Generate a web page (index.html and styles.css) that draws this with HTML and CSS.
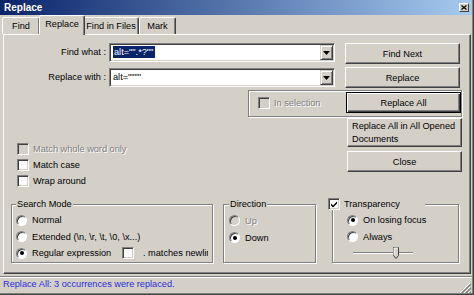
FILE: index.html
```html
<!DOCTYPE html>
<html>
<head>
<meta charset="utf-8">
<link rel="stylesheet" href="styles.css">
</head>
<body>
<div class="win">
  <div class="title">
    <span class="title-text">Replace</span>
    <span class="close"><svg width="6" height="5" viewBox="0 0 6 5"><path d="M0.5 0.5 L5.5 4.5 M5.5 0.5 L0.5 4.5" stroke="#000" stroke-width="1.2"/></svg></span>
  </div>
  <div class="tabs">
    <div class="tab t-find">Find</div>
    <div class="tab t-replace active">Replace</div>
    <div class="tab t-files">Find in Files</div>
    <div class="tab t-mark">Mark</div>
  </div>
  <div class="panel">
    <div class="row r1">
      <span class="flabel">Find what :</span>
      <div class="combo">
        <div class="combo-text"><span class="sel">alt="".*?""</span></div>
        <div class="ddbtn"><svg width="7" height="4" viewBox="0 0 7 4"><path d="M0 0 H7 L3.5 4 Z" fill="#000"/></svg></div>
      </div>
      <button class="btn">Find Next</button>
    </div>
    <div class="row r2">
      <span class="flabel">Replace with :</span>
      <div class="combo combo2">
        <div class="combo-text">alt=""""</div>
        <div class="ddbtn"><svg width="7" height="4" viewBox="0 0 7 4"><path d="M0 0 H7 L3.5 4 Z" fill="#000"/></svg></div>
      </div>
      <button class="btn">Replace</button>
    </div>
    <div class="row r3">
      <div class="selgroup etched">
        <span class="item chk-item disabled"><span class="cb cb-dis"></span>In selection</span>
        <button class="btn default">Replace All</button>
      </div>
    </div>
    <div class="row r4">
      <div class="opts">
        <div class="item chk-item disabled o1"><span class="cb cb-dis"></span>Match whole word only</div>
        <div class="item chk-item o2"><span class="cb"></span>Match case</div>
        <div class="item chk-item o3"><span class="cb"></span>Wrap around</div>
      </div>
      <div class="btncol">
        <button class="btn multi">Replace All in All Opened<br>Documents</button>
        <button class="btn">Close</button>
      </div>
    </div>
    <div class="row groups">
      <div class="group etched g-search">
        <span class="gtitle">Search Mode</span>
        <div class="item rad-item i1"><span class="radio"></span>Normal</div>
        <div class="item rad-item i2"><span class="radio"></span>Extended (\n, \r, \t, \0, \x...)</div>
        <div class="item i3">
          <span class="regex"><span class="radio"><span class="dot"></span></span>Regular expression</span>
          <span class="newline"><span class="cb"></span><span class="nltext">. matches newline</span></span>
        </div>
      </div>
      <div class="group etched g-dir">
        <span class="gtitle">Direction</span>
        <div class="item rad-item i1 disabled"><span class="radio radio-dis"></span>Up</div>
        <div class="item rad-item i2"><span class="radio"><span class="dot"></span></span>Down</div>
      </div>
      <div class="group etched g-trans">
        <span class="gtitle ttitle"><span class="cb"><svg width="8" height="8" viewBox="0 0 8 8"><path d="M1 3.5 L3 5.5 L7 1.5 V3.5 L3 7.5 L1 5.5 Z" fill="#000"/></svg></span>Transparency</span>
        <div class="item rad-item i1"><span class="radio"><span class="dot"></span></span>On losing focus</div>
        <div class="item rad-item i2"><span class="radio"></span>Always</div>
        <div class="slider">
          <span class="track tl"></span>
          <svg class="thumb" width="6" height="12" viewBox="0 0 6 12"><path d="M0.5 0.5 H5.5 V8.5 L3 11.5 L0.5 8.5 Z" fill="#d4d0c8" stroke="#404040"/><path d="M1 8 V1 H5" fill="none" stroke="#fff"/></svg>
          <span class="track tr"></span>
        </div>
      </div>
    </div>
  </div>
  <div class="status">
    <span class="stext">Replace All: 3 occurrences were replaced.</span>
    <svg class="grip" width="12" height="12" viewBox="0 0 12 12">
      <path d="M11 1 L1 11 M11 5 L5 11 M11 9 L9 11" stroke="#fff" stroke-width="1"/>
      <path d="M12 2 L2 12 M12 6 L6 12 M12 10 L10 12" stroke="#808080" stroke-width="1.4"/>
    </svg>
  </div>
</div>
</body>
</html>
```

FILE: styles.css
```css
html, body {
  margin: 0;
  padding: 0;
  background: #d4d0c8;
}
body {
  font-family: "Liberation Sans", Arial, sans-serif;
  font-size: 9.2px;
  color: #000;
}
.win {
  width: 474px;
  height: 295px;
  box-sizing: border-box;
  border-right: 1px solid #404040;
  border-bottom: 1px solid #404040;
  box-shadow: inset -1px -1px 0 #808080;
  display: flex;
  flex-direction: column;
  overflow: hidden;
}
.title {
  height: 15px;
  flex: none;
  margin-right: 1px;
  background: linear-gradient(to right, #0a246a, #a6caf0);
  display: flex;
  align-items: center;
  padding: 0 3px 0 4px;
}
.title-text {
  flex: 1;
  color: #fff;
  font-weight: bold;
  font-size: 10px;
}
.close {
  width: 10px;
  height: 9px;
  box-sizing: border-box;
  background: #d4d0c8;
  border: 1px solid;
  border-color: #fff #404040 #404040 #fff;
  display: flex;
  align-items: center;
  justify-content: center;
}
.tabs {
  height: 19px;
  flex: none;
  display: flex;
  align-items: flex-end;
  padding-left: 2px;
  position: relative;
  z-index: 1;
}
.tab {
  height: 17px;
  box-sizing: border-box;
  border: 1px solid;
  border-bottom: none;
  border-color: #fff #404040 transparent #fff;
  border-radius: 2px 2px 0 0;
  box-shadow: inset -1px 0 0 #808080;
  background: #d4d0c8;
  display: flex;
  align-items: center;
  justify-content: center;
  padding-bottom: 1px;
}
.t-find { width: 38px; }
.t-replace { width: 46px; }
.t-files { width: 56px; }
.t-mark { width: 37px; }
.tab.active {
  height: 20px;
  margin: 0 -2px -1px -1px;
  position: relative;
  z-index: 2;
  padding-bottom: 3px;
}
.panel {
  height: 240px;
  width: 468px;
  flex: none;
  box-sizing: border-box;
  margin-left: 3px;
  border: 1px solid;
  border-color: #fff #404040 #404040 #fff;
  box-shadow: inset -1px -1px 0 #808080;
  padding-top: 8px;
}
.row {
  display: flex;
  align-items: flex-start;
}
.r1 { height: 21px; }
.r2 { height: 21px; margin-top: 3px; }
.flabel {
  width: 102px;
  margin-right: 3px;
  text-align: right;
  line-height: 19px;
  white-space: nowrap;
}
.r2 .flabel { margin-top: 1px; }
.combo {
  width: 226px;
  height: 19px;
  box-sizing: border-box;
  background: #fff;
  border: 1px solid;
  border-color: #808080 #fff #fff #808080;
  box-shadow: inset 1px 1px 0 #404040, inset -1px -1px 0 #d4d0c8;
  display: flex;
  align-items: center;
  padding: 1px;
}
.combo2 { margin-top: 1px; }
.combo-text {
  flex: 1;
  padding-left: 2px;
  white-space: nowrap;
  line-height: 13px;
}
.sel {
  background: #0a246a;
  color: #fff;
  padding: 1px 2px 1px 1px;
}
.ddbtn {
  width: 13px;
  height: 15px;
  box-sizing: border-box;
  background: #d4d0c8;
  border: 1px solid;
  border-color: #d4d0c8 #404040 #404040 #d4d0c8;
  box-shadow: inset 1px 1px 0 #fff, inset -1px -1px 0 #808080;
  display: flex;
  align-items: center;
  justify-content: center;
}
.btn {
  width: 115px;
  height: 21px;
  margin: 0 0 0 10px;
  padding: 0;
  box-sizing: border-box;
  font: inherit;
  color: #000;
  background: #d4d0c8;
  border: 1px solid;
  border-color: #fff #404040 #404040 #fff;
  box-shadow: inset -1px -1px 0 #808080;
  flex: none;
}
.btn.default {
  border: 1px solid #000;
  box-shadow: inset 1px 1px 0 #fff, inset -1px -1px 0 #404040, inset -2px -2px 0 #808080;
  margin: 1px 0 0 auto;
}
.etched {
  border: 1px solid #808080;
  box-shadow: inset 1px 1px 0 #fff, 1px 1px 0 #fff;
  box-sizing: border-box;
}
.r3 { margin-top: 2px; }
.selgroup {
  margin-left: 244px;
  width: 214px;
  height: 27px;
  display: flex;
  align-items: flex-start;
}
.selgroup .chk-item {
  height: 23px;
  margin-left: 9px;
}
.item {
  display: flex;
  align-items: center;
  white-space: nowrap;
}
.chk-item { gap: 4px; }
.rad-item { gap: 5px; }
.disabled {
  color: #808080;
  text-shadow: 1px 1px 0 #fff;
}
.cb {
  width: 12px;
  height: 12px;
  flex: none;
  box-sizing: border-box;
  background: #fff;
  border: 1px solid;
  border-color: #808080 #fff #fff #808080;
  box-shadow: inset 1px 1px 0 #404040, inset -1px -1px 0 #d4d0c8;
  display: flex;
  align-items: center;
  justify-content: center;
}
.cb-dis { background: #d4d0c8; }
.radio {
  width: 11px;
  height: 11px;
  flex: none;
  box-sizing: border-box;
  border-radius: 50%;
  background: #fff;
  border: 1px solid;
  border-color: #808080 #fff #fff #808080;
  box-shadow: inset 1px 1px 0 #404040;
  display: flex;
  align-items: center;
  justify-content: center;
}
.radio-dis { background: #d4d0c8; }
.dot {
  width: 4px;
  height: 4px;
  border-radius: 50%;
  background: #000;
}
.r4 {
  margin-top: 1px;
  height: 71px;
}
.opts {
  padding: 22px 0 0 13px;
  display: flex;
  flex-direction: column;
}
.o1 { height: 17px; }
.o2 { height: 16px; }
.o3 { height: 16px; }
.btncol {
  margin-left: auto;
  margin-right: 8px;
  display: flex;
  flex-direction: column;
  gap: 4px;
}
.btncol .btn { margin-left: 0; }
.btn.multi {
  height: 29px;
  text-align: left;
  padding-left: 4px;
  line-height: 12.5px;
}
.groups { margin-top: 15px; }
.group {
  height: 59px;
  display: flex;
  flex-direction: column;
  align-items: flex-start;
}
.gtitle {
  height: 12px;
  line-height: 12px;
  margin-top: -7px;
  padding: 0 1px;
  background: #d4d0c8;
  white-space: nowrap;
  margin-bottom: 2px;
}
.g-search {
  margin-left: 7px;
  width: 202px;
  padding-left: 4px;
}
.g-dir {
  margin-left: 10px;
  width: 93px;
  padding-left: 5px;
}
.g-trans {
  margin-left: 16px;
  width: 127px;
  padding-left: 14px;
}
.ttitle {
  display: flex;
  align-items: center;
  gap: 4px;
  width: 96px;
  margin-left: -20px;
  padding-left: 1px;
}
.i1 { height: 16px; }
.i2 { height: 17px; }
.i3 { height: 16px; gap: 0; }
.g-dir .i1 { height: 17px; }
.regex {
  display: flex;
  align-items: center;
  gap: 5px;
  width: 106px;
}
.newline {
  display: flex;
  align-items: center;
  gap: 9px;
  width: 86px;
  overflow: hidden;
}
.slider {
  display: flex;
  align-items: center;
  height: 13px;
  padding-left: 6px;
  margin-top: 1px;
}
.track {
  height: 2px;
  box-sizing: border-box;
  border-top: 1px solid #808080;
  border-bottom: 1px solid #fff;
}
.tl { width: 40px; }
.tr { width: 14px; }
.thumb { display: block; flex: none; }
.status {
  flex: 1;
  margin-top: 2px;
  margin-right: 1px;
  border-top: 1px solid #808080;
  box-shadow: inset 0 1px 0 #fff;
  display: flex;
  align-items: flex-start;
  padding-left: 3px;
}
.stext {
  color: #2b2bdc;
  line-height: 12px;
  margin-top: 1px;
}
.grip {
  margin-left: auto;
  margin-top: 5px;
  margin-right: 1px;
}
```
